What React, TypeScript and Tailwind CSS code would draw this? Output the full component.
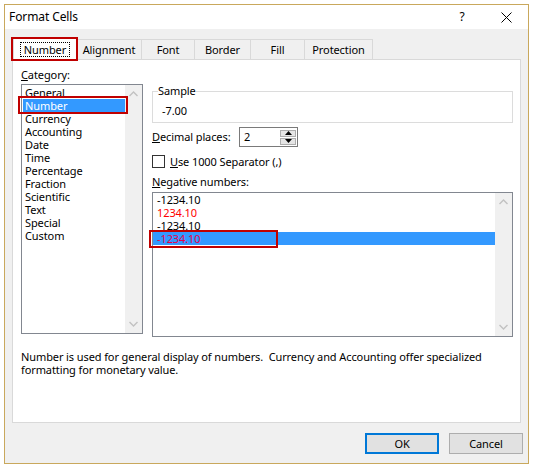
import React from 'react';

const categories = [
  'General',
  'Number',
  'Currency',
  'Accounting',
  'Date',
  'Time',
  'Percentage',
  'Fraction',
  'Scientific',
  'Text',
  'Special',
  'Custom',
];

const tabs = [
  { label: 'Number', w: 'w-[64px]' },
  { label: 'Alignment', w: 'w-[66px]' },
  { label: 'Font', w: 'w-[54px]' },
  { label: 'Border', w: 'w-[57px]' },
  { label: 'Fill', w: 'w-[55px]' },
  { label: 'Protection', w: 'w-[69px]' },
];

const negatives = [
  { text: '-1234.10', red: false },
  { text: '1234.10', red: true },
  { text: '-1234.10', red: false },
  { text: '-1234.10', red: true },
];

const ChevronUp = () => (
  <svg width="9" height="6" viewBox="0 0 9 6" fill="none">
    <polyline points="0.5,5 4.5,1 8.5,5" stroke="#c2c2c2" strokeWidth="1.4" />
  </svg>
);

const ChevronDown = () => (
  <svg width="9" height="6" viewBox="0 0 9 6" fill="none">
    <polyline points="0.5,1 4.5,5 8.5,1" stroke="#c2c2c2" strokeWidth="1.4" />
  </svg>
);

const ScrollBar = () => (
  <div className="w-[17px] h-full bg-[#f0f0f0] flex flex-col items-center justify-between py-[6px]">
    <ChevronUp />
    <ChevronDown />
  </div>
);

export default function App() {
  return (
    <div className="w-[533px] h-[467px] bg-white p-[4px] font-['Noto_Sans','Liberation_Sans',sans-serif] text-[11px] tracking-[-0.1px] text-black">
      <div className="w-[525px] h-[460px] border border-[#c9a85c] flex flex-col">
        {/* title bar */}
        <div className="h-[24px] bg-white flex items-center pl-[4px] shrink-0">
          <span className="flex-1 leading-[14px] text-[12px]">Format Cells</span>
          <span className="w-[12px] text-center leading-[14px] text-[12px] mr-[33px]">?</span>
          <svg width="11" height="11" viewBox="0 0 11 11" className="mr-[16px]">
            <line x1="0.5" y1="0.5" x2="10.5" y2="10.5" stroke="#000" strokeWidth="1" />
            <line x1="10.5" y1="0.5" x2="0.5" y2="10.5" stroke="#000" strokeWidth="1" />
          </svg>
        </div>

        {/* body */}
        <div className="flex-1 bg-[#f0f0f0] pt-[8px] flex flex-col">
          <div className="mx-[7px]">
            {/* tabs */}
            <div className="h-[22px] flex items-end pl-[1px]">
              {tabs.map((t, i) =>
                i === 0 ? (
                  <div
                    key={t.label}
                    className={`${t.w} relative z-10 h-[23px] -mb-px bg-white border border-b-0 border-[#d9d9d9] flex items-center justify-center`}
                  >
                    <span className="border border-dotted border-black px-[3px] leading-[13px]">{t.label}</span>
                    <div className="absolute -left-[3px] -right-[2px] -top-px -bottom-[1px] border-2 border-[#c00000]" />
                  </div>
                ) : (
                  <div
                    key={t.label}
                    className={`${t.w} -ml-px h-[20px] border border-b-0 border-[#d9d9d9] flex items-center justify-center leading-[14px]`}
                  >
                    {t.label}
                  </div>
                )
              )}
            </div>

            {/* panel */}
            <div className="h-[364px] bg-white border border-[#d9d9d9] pl-[8px] pt-[8px]">
              <div className="flex gap-[9px]">
                {/* category column */}
                <div className="w-[122px]">
                  <div className="h-[14px] leading-[14px]">
                    <span className="underline">C</span>ategory:
                  </div>
                  <div className="relative mt-[2px] h-[250px] border border-[#828790] bg-white flex">
                    <div className="flex-1 pt-[4px] pl-[1px] flex flex-col">
                      <div className="flex-1 overflow-hidden">
                        <div className="-mt-[3px]">
                          {categories.map((c) => (
                            <div
                              key={c}
                              className={`h-[13px] leading-[13px] pl-[2px] ${c === 'Number' ? 'bg-[#3399ff] text-white' : ''}`}
                            >
                              {c}
                            </div>
                          ))}
                        </div>
                      </div>
                    </div>
                    <ScrollBar />
                    <div className="absolute -left-[4px] top-[11px] w-[110px] h-[18px] border-2 border-[#c00000]" />
                  </div>
                </div>

                {/* format options column */}
                <div className="w-[361px] pt-[16px]">
                  <fieldset className="border border-[#dcdcdc] px-[5px] pb-[4px]">
                    <legend className="leading-[14px] px-0">Sample</legend>
                    <div className="pt-[6px] ml-[4px] leading-[14px]">-7.00</div>
                  </fieldset>

                  <div className="mt-[4px] h-[20px] flex items-center">
                    <span className="w-[87px] leading-[14px] whitespace-nowrap">
                      <span className="underline">D</span>ecimal places:
                    </span>
                    <div className="w-[59px] h-[20px] border border-[#7a7a7a] bg-white flex items-center">
                      <span className="flex-1 pl-[4px] leading-[14px]">2</span>
                      <div className="w-[16px] h-[15px] mr-[1px] flex flex-col gap-px">
                        <div className="flex-1 bg-[#e5e5e5] border border-[#adadad] flex items-center justify-center">
                          <svg width="7" height="4" viewBox="0 0 7 4">
                            <polygon points="0,4 3.5,0 7,4" fill="#000" />
                          </svg>
                        </div>
                        <div className="flex-1 bg-[#e5e5e5] border border-[#adadad] flex items-center justify-center">
                          <svg width="7" height="4" viewBox="0 0 7 4">
                            <polygon points="0,0 3.5,4 7,0" fill="#000" />
                          </svg>
                        </div>
                      </div>
                    </div>
                  </div>

                  <div className="mt-[8px] h-[13px] flex items-center gap-[5px]">
                    <div className="w-[13px] h-[13px] border border-[#333333] bg-white" />
                    <span className="leading-[14px]">
                      <span className="underline">U</span>se 1000 Separator (,)
                    </span>
                  </div>

                  <div className="mt-[7px] h-[14px] leading-[14px]">
                    <span className="underline">N</span>egative numbers:
                  </div>

                  <div className="relative mt-[3px] h-[145px] border border-[#828790] bg-white flex">
                    <div className="flex-1">
                      {negatives.map((n, i) => (
                        <div
                          key={i}
                          className={`h-[13px] leading-[13px] pl-[4px] ${i === 3 ? 'bg-[#3399ff]' : ''} ${n.red ? (i === 3 ? 'text-[#e8004c]' : 'text-[#ff0000]') : ''}`}
                        >
                          {n.text}
                        </div>
                      ))}
                    </div>
                    <ScrollBar />
                    <div className="absolute -left-[4px] top-[37px] w-[129px] h-[18px] border-2 border-[#c00000]" />
                  </div>
                </div>
              </div>

              <div className="mt-[13px] leading-[13px] whitespace-pre">
                {'Number is used for general display of numbers.  Currency and Accounting offer specialized\nformatting for monetary value.'}
              </div>
            </div>
          </div>

          {/* buttons */}
          <div className="mt-[10px] flex justify-end gap-[10px] pr-[5px]">
            <button className="w-[74px] h-[21px] bg-[#e1e1e1] border-2 border-[#0078d7] leading-[14px]">OK</button>
            <button className="w-[74px] h-[21px] bg-[#e1e1e1] border border-[#adadad] leading-[14px]">Cancel</button>
          </div>
        </div>
      </div>
    </div>
  );
}
